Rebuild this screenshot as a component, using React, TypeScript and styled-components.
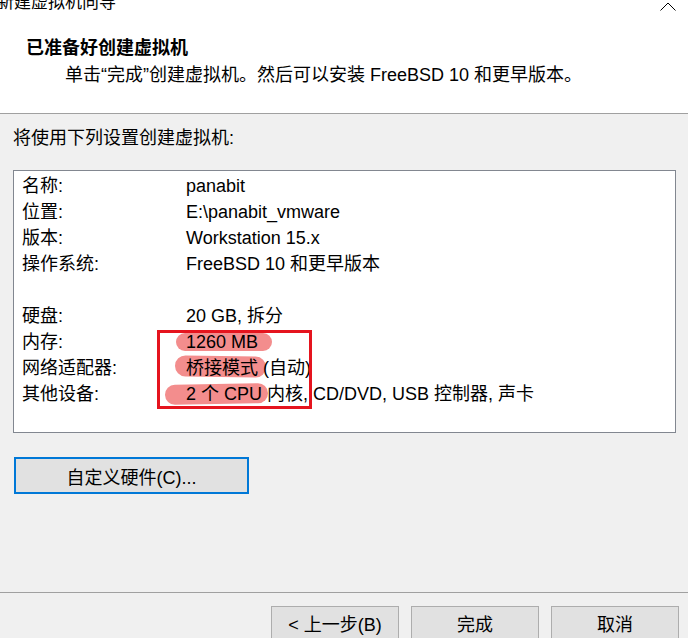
import React from 'react';
import styled, { createGlobalStyle } from 'styled-components';

const GlobalStyle = createGlobalStyle`
  html, body {
    margin: 0;
    padding: 0;
    background: #f0f0f0;
  }
  body {
    font-family: "Liberation Sans", "Noto Sans CJK SC", sans-serif;
    font-size: 18px;
    color: #000;
  }
`;

const Window = styled.div`
  width: 688px;
  height: 638px;
  overflow: hidden;
  display: flex;
  flex-direction: column;
  background: #f0f0f0;
`;

const Header = styled.header`
  height: 113px;
  flex-shrink: 0;
  background: #fff;
  border-bottom: 1px solid #a0a0a0;
  display: flex;
  flex-direction: column;
`;

const TitleBar = styled.div`
  height: 20px;
  margin-top: -7px;
  padding-right: 12px;
  display: flex;
  align-items: flex-start;
  justify-content: space-between;
`;

const WindowTitle = styled.span`
  font-size: 17px;
  line-height: 20px;
  margin-left: -3px;
  color: #000;
`;

const CollapseIcon = styled.svg`
  margin-top: 9px;
  display: block;
`;

const Title = styled.h1`
  margin: 24px 0 0 26px;
  font-size: 18px;
  line-height: 22px;
  font-weight: 700;
`;

const Subtitle = styled.p`
  margin: 5px 0 0 65px;
  font-size: 18px;
  line-height: 22px;
`;

const Body = styled.main`
  flex: 1;
  padding: 13px 12px 0 13px;
  display: flex;
  flex-direction: column;
  align-items: flex-start;
`;

const Intro = styled.div`
  line-height: 22px;
`;

const SummaryBox = styled.div`
  position: relative;
  box-sizing: border-box;
  width: 663px;
  height: 263px;
  margin-top: 21px;
  padding: 2px 8px 0;
  background: #fff;
  border: 1px solid #828790;
`;

const Row = styled.div`
  display: grid;
  grid-template-columns: 164px 1fr;
  height: 26px;
  line-height: 26px;
  white-space: nowrap;
`;

const Label = styled.span``;

const Value = styled.span`
  position: relative;
`;

const ValueText = styled.span`
  position: relative;
  z-index: 1;
`;

const Marker = styled.span<{ $left: number; $top: number; $w: number; $h: number; $tilt?: number }>`
  position: absolute;
  left: ${p => p.$left}px;
  top: ${p => p.$top}px;
  width: ${p => p.$w}px;
  height: ${p => p.$h}px;
  border-radius: ${p => p.$h / 2}px;
  background: #f38d8d;
  transform: rotate(${p => p.$tilt ?? 0}deg);
  z-index: 0;
`;

const RedFrame = styled.div`
  position: absolute;
  left: 143px;
  top: 159px;
  width: 155px;
  height: 79px;
  box-sizing: border-box;
  border: 3px solid #e5141e;
  z-index: 2;
  pointer-events: none;
`;

const Button = styled.button<{ $focused?: boolean }>`
  box-sizing: border-box;
  height: 34px;
  width: 128px;
  padding: 0;
  font-family: inherit;
  font-size: 18px;
  color: #000;
  background: #e1e1e1;
  border: 1px solid #adadad;
  ${p => p.$focused && `
    border: 2px solid #0078d7;
  `}
`;

const CustomizeButton = styled(Button)`
  width: 235px;
  height: 37px;
  margin: 24px 0 0 1px;
`;

const Footer = styled.footer`
  height: 46px;
  flex-shrink: 0;
  box-sizing: border-box;
  border-top: 1px solid #a0a0a0;
  padding: 13px 9px 0 0;
  display: flex;
  justify-content: flex-end;
  align-items: flex-start;
  gap: 12px;
`;

type Setting = {
  label: string;
  value: string;
  mark?: { left: number; top: number; w: number; h: number; tilt?: number };
};

const settings: Setting[] = [
  { label: '名称:', value: 'panabit' },
  { label: '位置:', value: 'E:\\panabit_vmware' },
  { label: '版本:', value: 'Workstation 15.x' },
  { label: '操作系统:', value: 'FreeBSD 10 和更早版本' },
  { label: '', value: '' },
  { label: '硬盘:', value: '20 GB, 拆分' },
  { label: '内存:', value: '1260 MB', mark: { left: -10, top: 4, w: 96, h: 18 } },
  { label: '网络适配器:', value: '桥接模式 (自动)', mark: { left: -11, top: 1, w: 91, h: 21, tilt: 1 } },
  { label: '其他设备:', value: '2 个 CPU 内核, CD/DVD, USB 控制器, 声卡', mark: { left: -21, top: 3, w: 103, h: 20, tilt: -1 } },
];

export default function App() {
  return (
    <>
      <GlobalStyle />
      <Window>
        <Header>
          <TitleBar>
            <WindowTitle>新建虚拟机向导</WindowTitle>
            <CollapseIcon width="16" height="9" viewBox="0 0 16 9">
              <polyline points="0.5,8.5 8,1 15.5,8.5" fill="none" stroke="#000" strokeWidth="1" />
            </CollapseIcon>
          </TitleBar>
          <Title>已准备好创建虚拟机</Title>
          <Subtitle>单击“完成”创建虚拟机。然后可以安装 FreeBSD 10 和更早版本。</Subtitle>
        </Header>

        <Body>
          <Intro>将使用下列设置创建虚拟机:</Intro>
          <SummaryBox>
            {settings.map((s, i) => (
              <Row key={i}>
                <Label>{s.label || '\u00a0'}</Label>
                <Value>
                  {s.mark && (
                    <Marker $left={s.mark.left} $top={s.mark.top} $w={s.mark.w} $h={s.mark.h} $tilt={s.mark.tilt} />
                  )}
                  <ValueText>{s.value}</ValueText>
                </Value>
              </Row>
            ))}
            <RedFrame />
          </SummaryBox>
          <CustomizeButton $focused>自定义硬件(C)...</CustomizeButton>
        </Body>

        <Footer>
          <Button>&lt; 上一步(B)</Button>
          <Button>完成</Button>
          <Button>取消</Button>
        </Footer>
      </Window>
    </>
  );
}
